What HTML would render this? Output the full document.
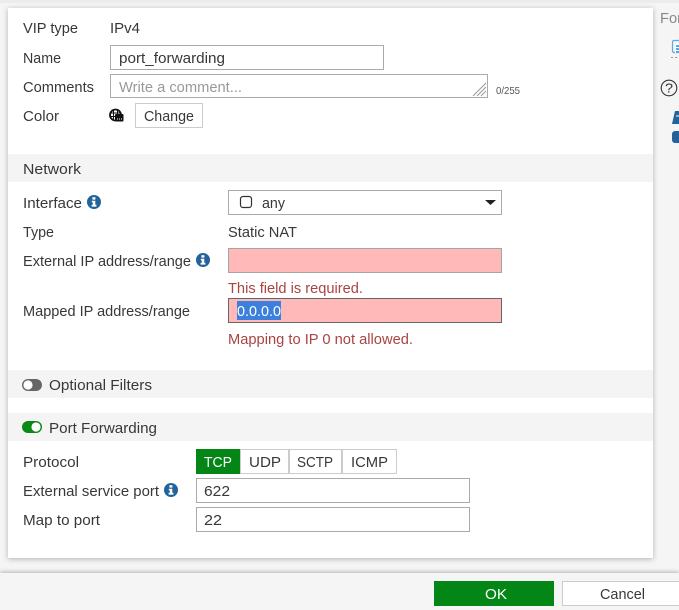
<!DOCTYPE html>
<html>
<head>
<meta charset="utf-8">
<style>
html,body{margin:0;padding:0;width:679px;height:610px;overflow:hidden;background:#f5f5f5}
svg{display:block}
text{font-family:"Liberation Sans",sans-serif;font-size:15px;fill:#383838}
</style>
</head>
<body>
<svg width="679" height="610" viewBox="0 0 679 610" xmlns="http://www.w3.org/2000/svg">
<defs>
<filter id="s" x="-5%" y="-5%" width="110%" height="110%"><feDropShadow dx="0" dy="1" stdDeviation="3" flood-color="#000" flood-opacity=".28"/></filter>
<filter id="f" x="-5%" y="-30%" width="110%" height="140%"><feDropShadow dx="0" dy="-1" stdDeviation="2" flood-color="#000" flood-opacity=".28"/></filter>
<g id="info"><circle r="7" fill="#22639b"/><rect x="-1.6" y="-4.8" width="3" height="2.4" fill="#fff"/><path d="M-2.2-1.2H1.3V2.8H2.4V4.6H-2.4V2.8H-1.2V.4H-2.2Z" fill="#fff"/></g>
</defs>
<rect width="679" height="610" fill="#f5f5f5"/>
<rect y="0" width="679" height="3" fill="#ececec"/>
<rect x="8" y="8" width="645" height="550" fill="#fff" filter="url(#s)"/>

<rect x="8" y="154" width="645" height="28" fill="#f4f4f4"/>
<rect x="8" y="370" width="645" height="28" fill="#f4f4f4"/>
<rect x="8" y="413" width="645" height="28" fill="#f4f4f4"/>

<g fill="#fff" stroke="#aaa">
<rect x="110.500" y="45.500" width="273" height="24"/>
<rect x="110.500" y="74.500" width="377" height="23"/>
<rect x="228.500" y="190.500" width="273" height="24"/>
<rect x="196.500" y="478.500" width="273" height="24"/>
<rect x="196.500" y="507.500" width="273" height="24"/>
</g>
<rect x="228.500" y="248.500" width="273" height="24" fill="#ffb9b9" stroke="#a5a5a5"/>
<rect x="228.500" y="298.500" width="273" height="24" fill="#ffb9b9" stroke="#666"/>
<rect x="237" y="301" width="44" height="19" fill="#3b80dc"/>
<rect x="135.500" y="103.500" width="67" height="24" fill="#fff" stroke="#ccc"/>

<path d="M473 96L486 83M477 96L486 87M481 96L486 91" stroke="#999" stroke-width="1" fill="none"/>

<rect x="240.500" y="196.500" width="11" height="11" rx="2.500" fill="none" stroke="#333" stroke-width="1.200"/>
<path d="M485 200H496L490.500 205Z" fill="#222"/>

<circle cx="115.500" cy="115" r="5.500" fill="#fff" stroke="#111" stroke-width="1.800"/>
<path d="M110 113H121M110 116.500H121M113.500 109.500V120.500M117.500 109.500V120.500" stroke="#111" stroke-width="1"/>
<rect x="115" y="114" width="8.500" height="7.500" rx="1" fill="#111"/>
<path d="M117 119h1M119 119h1M121 119h1" stroke="#fff" stroke-width="1"/>

<use href="#info" x="94" y="202"/>
<use href="#info" x="203" y="260"/>
<use href="#info" x="171" y="490"/>

<rect x="22" y="379" width="20" height="12" rx="6" fill="#666"/>
<circle cx="28" cy="385" r="4.600" fill="#fff"/>
<rect x="22" y="421" width="20" height="12" rx="6" fill="#0a8a14"/>
<circle cx="36" cy="427" r="4.600" fill="#fff"/>

<rect x="196" y="449" width="44" height="25" fill="#038615"/>
<rect x="240.500" y="449.500" width="48" height="24" fill="#fff" stroke="#ccc"/>
<rect x="289.500" y="449.500" width="52" height="24" fill="#fff" stroke="#ccc"/>
<rect x="342.500" y="449.500" width="54" height="24" fill="#fff" stroke="#ccc"/>

<rect x="0" y="573" width="679" height="37" fill="#f5f5f5" filter="url(#f)"/>
<rect x="434" y="581" width="120" height="25" fill="#038615"/>
<rect x="562.500" y="581.500" width="118" height="24" fill="#fff" stroke="#ccc"/>

<text x="660" y="23" textLength="22" lengthAdjust="spacingAndGlyphs" style="fill:#888">For</text>
<rect x="672.500" y="40.500" width="9" height="12" rx="1.500" fill="none" stroke="#5aa7ea" stroke-width="1.200"/>
<rect x="675" y="44" width="5" height="9" fill="#fff"/>
<path d="M676 46h3M676 49h3M676 52h3" stroke="#5aa7ea" stroke-width="2"/>
<path d="M671 57.500H679" stroke="#999" stroke-dasharray="2 2"/>
<circle cx="669" cy="88" r="7.800" fill="none" stroke="#333" stroke-width="1.100"/>
<text x="665" y="92.500" textLength="8" lengthAdjust="spacingAndGlyphs" style="font-size:13px;fill:#333">?</text>
<path d="M672 124L675 111H679V124Z" fill="#22639b"/>
<path d="M676 116H679" stroke="#fff" stroke-width="1"/>
<rect x="672" y="131" width="12" height="12" rx="3" fill="#22639b"/>

<text x="23" y="33" textLength="55" lengthAdjust="spacingAndGlyphs">VIP type</text>
<text x="110" y="33" textLength="30" lengthAdjust="spacingAndGlyphs">IPv4</text>
<text x="23" y="63" textLength="38" lengthAdjust="spacingAndGlyphs">Name</text>
<text x="119" y="63" textLength="106" lengthAdjust="spacingAndGlyphs">port_forwarding</text>
<text x="23" y="92" textLength="71" lengthAdjust="spacingAndGlyphs">Comments</text>
<text x="119" y="92" textLength="123" lengthAdjust="spacingAndGlyphs" style="fill:#999">Write a comment...</text>
<text x="496" y="94" textLength="24" lengthAdjust="spacingAndGlyphs" style="font-size:10.500px;fill:#555">0/255</text>
<text x="23" y="121" textLength="36" lengthAdjust="spacingAndGlyphs">Color</text>
<text x="144" y="121" textLength="50" lengthAdjust="spacingAndGlyphs">Change</text>
<text x="23" y="174" textLength="58" lengthAdjust="spacingAndGlyphs">Network</text>
<text x="23" y="208" textLength="59" lengthAdjust="spacingAndGlyphs">Interface</text>
<text x="262" y="208" textLength="23" lengthAdjust="spacingAndGlyphs">any</text>
<text x="23" y="237" textLength="31" lengthAdjust="spacingAndGlyphs">Type</text>
<text x="228" y="237" textLength="69" lengthAdjust="spacingAndGlyphs">Static NAT</text>
<text x="23" y="266" textLength="168" lengthAdjust="spacingAndGlyphs">External IP address/range</text>
<text x="228" y="293" textLength="135" lengthAdjust="spacingAndGlyphs" style="fill:#a94442">This field is required.</text>
<text x="23" y="316" textLength="167" lengthAdjust="spacingAndGlyphs">Mapped IP address/range</text>
<text x="237" y="316" textLength="44" lengthAdjust="spacingAndGlyphs" style="fill:#fff">0.0.0.0</text>
<text x="228" y="344" textLength="185" lengthAdjust="spacingAndGlyphs" style="fill:#a94442">Mapping to IP 0 not allowed.</text>
<text x="49" y="390" textLength="103" lengthAdjust="spacingAndGlyphs">Optional Filters</text>
<text x="49" y="433" textLength="108" lengthAdjust="spacingAndGlyphs">Port Forwarding</text>
<text x="23" y="467" textLength="56" lengthAdjust="spacingAndGlyphs">Protocol</text>
<text x="204" y="467" textLength="28" lengthAdjust="spacingAndGlyphs" style="fill:#fff">TCP</text>
<text x="249" y="467" textLength="32" lengthAdjust="spacingAndGlyphs">UDP</text>
<text x="297" y="467" textLength="36" lengthAdjust="spacingAndGlyphs">SCTP</text>
<text x="351" y="467" textLength="37" lengthAdjust="spacingAndGlyphs">ICMP</text>
<text x="23" y="496" textLength="136" lengthAdjust="spacingAndGlyphs">External service port</text>
<text x="204" y="496" textLength="26" lengthAdjust="spacingAndGlyphs">622</text>
<text x="23" y="525" textLength="77" lengthAdjust="spacingAndGlyphs">Map to port</text>
<text x="204" y="525" textLength="18" lengthAdjust="spacingAndGlyphs">22</text>
<text x="485" y="599" textLength="22" lengthAdjust="spacingAndGlyphs" style="fill:#fff">OK</text>
<text x="600" y="599" textLength="45" lengthAdjust="spacingAndGlyphs">Cancel</text>
</svg>
</body>
</html>
